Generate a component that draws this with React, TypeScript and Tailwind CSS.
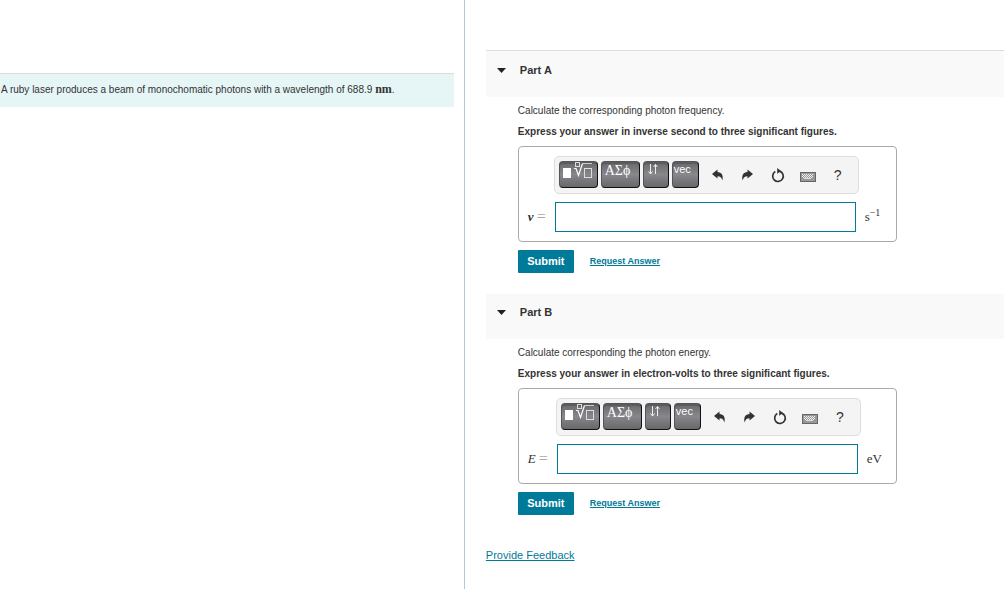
import type { ReactNode } from "react";

const toolClass =
  "flex h-[27px] items-start overflow-hidden rounded-[4px] border border-[#111] border-t-[#555] border-l-[#555] bg-linear-to-b from-[#68686c] via-[#87878c] to-[#68686a] text-white shadow-[inset_0_2px_0_#5c5c5f]";

const iconClass = "flex h-[27px] w-[30px] items-center justify-center text-[#333]";

function TemplatesIcon() {
  return (
    <svg width="33" height="22" viewBox="0 0 33 22" fill="none" aria-hidden="true">
      <rect x="1" y="6" width="8" height="10" fill="#fff" />
      <rect x="13.500" y="0.500" width="4" height="4" stroke="#ddd" />
      <path d="M12 6.500 L14 6.500 L16.500 13.500 L20.500 1.500" stroke="#fff" strokeWidth="1.200" />
      <path d="M20 1.500 H30" stroke="#ccc" />
      <rect x="22.500" y="6.500" width="7" height="9" stroke="#ddd" />
    </svg>
  );
}

function ArrowsIcon() {
  return (
    <svg width="12" height="15" viewBox="0 0 12 15" fill="none" stroke="#eee" strokeWidth="1" aria-hidden="true">
      <path d="M2.500 2 V12 M0.500 9.500 L2.500 12 L4.500 9.500" />
      <path d="M7.500 12 V2.500 M5.500 5 L7.500 2.500 L9.500 5" />
    </svg>
  );
}

function UndoIcon({ flipped = false }: { flipped?: boolean }) {
  return (
    <svg width="13" height="13" viewBox="0 0 13 13" fill="currentColor" aria-hidden="true">
      <path
        transform={flipped ? "translate(13 0) scale(-1 1)" : undefined}
        d="M1 5 L6.500 0.500 V3 C10.500 3.200 12.600 6 11.400 11.500 C10.700 8.600 9.300 7.300 6.500 7.200 V9.500 Z"
      />
    </svg>
  );
}

function ResetIcon() {
  return (
    <svg width="14" height="15" viewBox="0 0 14 15" fill="none" aria-hidden="true">
      <path d="M8.500 3.100 A5.300 5.300 0 1 1 4.300 3.600" stroke="currentColor" strokeWidth="1.700" />
      <path d="M6.200 0 L10 2.900 L6.200 5.800 Z" fill="currentColor" />
    </svg>
  );
}

function KeyboardIcon() {
  return (
    <svg width="16" height="10" viewBox="0 0 16 10" fill="none" aria-hidden="true">
      <rect x="0.500" y="0.500" width="15" height="9" fill="#999" stroke="#666" />
      <path d="M2 2.500 H14 M2 4.500 H14" stroke="#eee" strokeDasharray="1 1" />
      <path d="M3 3.500 H13 M3 5.500 H12" stroke="#eee" strokeDasharray="1 1" />
      <path d="M4 6.500 H11" stroke="#ddd" />
    </svg>
  );
}

function Toolbar() {
  return (
    <div
      role="toolbar"
      aria-label="Math entry"
      className="-ml-px flex h-[38px] w-[305px] items-center rounded-[5px] border border-[#ddd] bg-[#f4f4f4] pl-1"
    >
      <div className="flex gap-[3px] pr-1 pb-px">
        <button type="button" aria-label="Templates" className={`${toolClass} w-[39px] justify-center`}>
          <TemplatesIcon />
        </button>
        <button
          type="button"
          aria-label="Symbols"
          className={`${toolClass} w-[39px] pl-[3px] font-['Liberation_Serif',serif] text-[14px] leading-[18px]`}
        >
          ΑΣϕ
        </button>
        <button
          type="button"
          aria-label="Subscript and superscript"
          className={`${toolClass} w-[26px] pl-1`}
        >
          <ArrowsIcon />
        </button>
        <button type="button" className={`${toolClass} w-[27px] pl-px text-[11px] leading-[14px]`}>
          vec
        </button>
      </div>
      <button type="button" aria-label="Undo" className={iconClass}>
        <UndoIcon />
      </button>
      <button type="button" aria-label="Redo" className={iconClass}>
        <UndoIcon flipped />
      </button>
      <button type="button" aria-label="Reset" className={iconClass}>
        <ResetIcon />
      </button>
      <button type="button" aria-label="Keyboard shortcuts" className={`${iconClass} pt-1`}>
        <KeyboardIcon />
      </button>
      <button type="button" className={`${iconClass} text-[14px]`}>
        ?
      </button>
    </div>
  );
}

interface PartProps {
  id: string;
  title: string;
  prompt: string;
  instruction: string;
  symbol: ReactNode;
  unit: ReactNode;
  first?: boolean;
}

function Part({ id, title, prompt, instruction, symbol, unit, first = false }: PartProps) {
  return (
    <section className="pb-[21px]">
      <h2
        className={`flex bg-[#f9f9f9] text-[11px] leading-4 font-bold text-[#333] ${
          first ? "h-[47px] border-t border-[#ddd] pt-[11px]" : "h-[45px] pt-[10px]"
        }`}
      >
        <button type="button" aria-expanded="true" className="flex h-4 items-center gap-[14px] pl-[11px]">
          <svg width="9" height="5" viewBox="0 0 9 5" fill="#222" aria-hidden="true">
            <path d="M0 0 H9 L4.500 5 Z" />
          </svg>
          {title}
        </button>
      </h2>
      <div className="pl-8 text-[#333]">
        <div className="pt-[3px] pb-[4px] text-[10px] leading-[21px]">
          <p>{prompt}</p>
          <p className="font-bold">{instruction}</p>
        </div>
        <div className="grid max-w-[379px] grid-cols-[auto_301px_auto] items-center justify-start gap-x-[9px] gap-y-2 rounded-[4px] border border-[#aaa] py-[9px] pl-[9px]">
          <div className="col-start-2">
            <Toolbar />
          </div>
          <label
            htmlFor={id}
            className="col-start-1 flex h-[30px] items-center gap-[3px] font-['Liberation_Serif',serif] text-[13px] leading-4"
          >
            {symbol}
            <span className="text-[16px] text-[#aaa]">=</span>
          </label>
          <input
            id={id}
            type="text"
            className="h-[30px] w-full border border-[#007a99] bg-white px-1 text-[13px] outline-none"
          />
          <span className="font-['Liberation_Serif',serif] text-[13px] leading-4">{unit}</span>
        </div>
        <div className="mt-2 flex items-start gap-4">
          <button
            type="button"
            className="h-[23px] w-14 rounded-[1px] bg-[#007a99] text-[11px] leading-[23px] font-bold text-white"
          >
            Submit
          </button>
          <a href="#answer" className="pt-[3px] text-[9px] leading-4 font-bold text-[#007a99] underline">
            Request Answer
          </a>
        </div>
      </div>
    </section>
  );
}

export default function App() {
  return (
    <div className="flex min-h-screen bg-white font-['Liberation_Sans',Arial,sans-serif]">
      <aside className="w-[46.3%] shrink-0 border-r border-[#b3c6e0] pt-[73px] pr-[10px]">
        <p className="border-t border-[#d8dfdf] bg-[#e6f6f6] pt-2 pb-[9px] pl-px text-[10px] leading-4 text-[#333]">
          A ruby laser produces a beam of monochomatic photons with a wavelength of 688.9{" "}
          <span className="font-['Liberation_Serif',serif] text-[12px] leading-3 font-bold">nm</span>.
        </p>
      </aside>
      <main className="min-w-0 flex-1 pt-[50px] pl-[21px]">
        <Part
          first
          id="frequency"
          title="Part A"
          prompt="Calculate the corresponding photon frequency."
          instruction="Express your answer in inverse second to three significant figures."
          symbol={<i className="font-bold">ν</i>}
          unit={
            <>
              s<sup className="text-[10px]">−1</sup>
            </>
          }
        />
        <Part
          id="energy"
          title="Part B"
          prompt="Calculate corresponding the photon energy."
          instruction="Express your answer in electron-volts to three significant figures."
          symbol={<i>E</i>}
          unit="eV"
        />
        <a href="#feedback" className="mt-[11px] inline-block text-[11px] leading-4 text-[#007a99] underline">
          Provide Feedback
        </a>
      </main>
    </div>
  );
}
